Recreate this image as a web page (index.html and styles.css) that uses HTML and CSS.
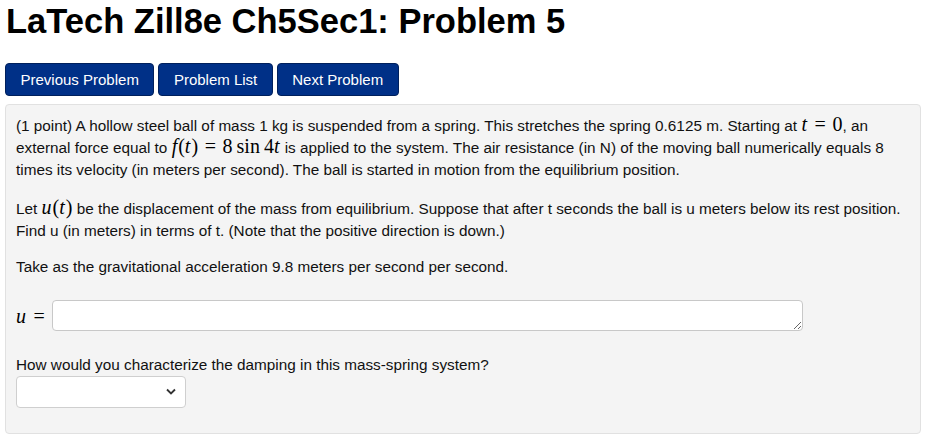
FILE: index.html
```html
<!DOCTYPE html>
<html>
<head>
<meta charset="utf-8">
<link rel="stylesheet" href="styles.css">
</head>
<body>
<div class="page">
  <h1 class="title">LaTech Zill8e Ch5Sec1: Problem 5</h1>
  <div class="nav">
    <a class="btn">Previous Problem</a>
    <a class="btn">Problem List</a>
    <a class="btn">Next Problem</a>
  </div>
  <div class="problem">
    <p class="p1">(1 point) A hollow steel ball of mass 1 kg is suspended from a spring. This stretches the spring 0.6125 m. Starting at <span class="m"><i>t</i><span class="rel">=</span>0</span>, an external force equal to <span class="m"><i>f</i>(<i>t</i>)<span class="rel">=</span>8<span class="op">sin</span>4<i>t</i></span> is applied to the system. The air resistance (in N) of the moving ball numerically equals 8 times its velocity (in meters per second). The ball is started in motion from the equilibrium position.</p>
    <p>Let <span class="m"><i>u</i>(<i>t</i>)</span> be the displacement of the mass from equilibrium. Suppose that after t seconds the ball is u meters below its rest position. Find u (in meters) in terms of t. (Note that the positive direction is down.)</p>
    <p class="p3">Take as the gravitational acceleration 9.8 meters per second per second.</p>
    <div class="answer">
      <span class="m"><i>u</i><span class="rel">=</span></span>
      <textarea class="ans-box"></textarea>
    </div>
    <p class="q">How would you characterize the damping in this mass-spring system?</p>
    <div class="select">
      <svg class="chev" width="10" height="7" viewBox="0 0 10 7"><path d="M1 1.5 L5 5.5 L9 1.5" fill="none" stroke="#333" stroke-width="1.8"/></svg>
    </div>
  </div>
</div>
</body>
</html>
```
FILE: styles.css
```css
html, body {
  margin: 0;
  padding: 0;
  background: #fff;
}
.page {
  padding: 0 24px 0 5px;
  font-family: "Liberation Sans", Arial, sans-serif;
  color: #111;
}
.title {
  margin: 0;
  padding: 0 0 0 1px;
  font-size: 34.5px;
  line-height: 42px;
  font-weight: bold;
  color: #000;
}
.nav {
  display: flex;
  gap: 4px;
  margin-top: 21px;
}
.btn {
  display: block;
  height: 33px;
  line-height: 31px;
  padding: 0 14.5px;
  box-sizing: border-box;
  background: #003087;
  border: 1px solid #00205c;
  border-radius: 4px;
  color: #fff;
  font-size: 15px;
  text-decoration: none;
}
.problem {
  margin-top: 8px;
  background: #f4f4f4;
  border: 1px solid #e1e1e1;
  border-radius: 4px;
  padding: 10px 10px 25px 10px;
  font-size: 15.3px;
  line-height: 21.75px;
}
.problem p {
  margin: 0 0 15px 0;
}
.problem .p1 {
  margin-bottom: 17.5px;
}
.problem .p3 {
  margin-bottom: 22px;
}
.m {
  font-family: "Liberation Serif", "Times New Roman", serif;
  font-size: 20px;
  line-height: 0;
  color: #000;
}
.m i {
  font-style: italic;
  margin-right: 1px;
}
.rel {
  margin: 0 0.33em;
}
.op {
  margin: 0 0.2em;
}
.answer {
  display: flex;
  align-items: center;
  gap: 7px;
  margin-bottom: 23px;
}
.answer .m {
  line-height: 1;
}
.answer .rel {
  margin-right: 0;
}
.ans-box {
  width: 751px;
  height: 31px;
  box-sizing: border-box;
  border: 1px solid #c8c8c8;
  border-radius: 4px;
  background: #fff;
  resize: vertical;
  margin: 0;
}
.problem .q {
  margin-bottom: 0;
}
.select {
  width: 170px;
  height: 32px;
  box-sizing: border-box;
  border: 1px solid #cfcfcf;
  border-radius: 4px;
  background: #fff;
  display: flex;
  align-items: center;
  justify-content: flex-end;
  padding-right: 9px;
}
```
